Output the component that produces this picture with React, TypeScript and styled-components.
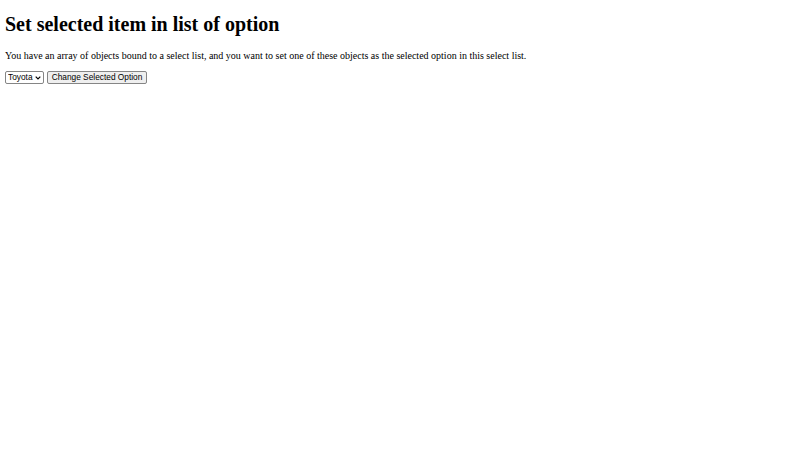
import React from "react";
import styled, { createGlobalStyle } from "styled-components";

const Global = createGlobalStyle`
  html, body { margin: 0; padding: 0; background: #fff; }
  body { font-family: "Liberation Serif", "Times New Roman", serif; color: #000; }
`;

const Page = styled.div`
  padding: 13px 5px 5px 5px;
`;

const Title = styled.h1`
  font-size: 20px;
  font-weight: bold;
  margin: 0 0 14px 0;
  line-height: normal;
`;

const Text = styled.p`
  font-size: 10px;
  margin: 0 0 10px 0;
  line-height: normal;
`;

const Controls = styled.div`
  display: flex;
  align-items: center;
  gap: 3px;
`;

const SelectWrap = styled.div`
  position: relative;
  display: inline-flex;
`;

const Select = styled.select`
  appearance: none;
  -webkit-appearance: none;
  box-sizing: border-box;
  width: 39px;
  height: 13px;
  padding: 0 9px 0 2px;
  margin: 0;
  border: 1px solid #858585;
  border-radius: 2px;
  background: #fff;
  color: #000;
  font-family: "Liberation Sans", Arial, sans-serif;
  font-size: 8.33px;
  line-height: 11px;
`;

const Chevron = styled.svg`
  position: absolute;
  right: 3px;
  top: 4.5px;
  width: 6px;
  height: 4px;
  pointer-events: none;
`;

const Button = styled.button`
  box-sizing: border-box;
  width: 100px;
  height: 13px;
  padding: 0 3px;
  margin: 0;
  border: 1px solid #858585;
  border-radius: 2px;
  background: #efefef;
  color: #000;
  font-family: "Liberation Sans", Arial, sans-serif;
  font-size: 8.33px;
  line-height: 11px;
  white-space: nowrap;
`;

export default function App() {
  return (
    <>
      <Global />
      <Page>
        <Title>Set selected item in list of option</Title>
        <Text>
          You have an array of objects bound to a select list, and you want to set one of these objects as the selected option in this select list.
        </Text>
        <Controls>
          <SelectWrap>
            <Select defaultValue="Toyota">
              <option>Toyota</option>
              <option>Honda</option>
              <option>Ford</option>
            </Select>
            <Chevron viewBox="0 0 6 4">
              <path d="M0.7 0.7 L3 3 L5.3 0.7" fill="none" stroke="#000" strokeWidth="1.2" />
            </Chevron>
          </SelectWrap>
          <Button>Change Selected Option</Button>
        </Controls>
      </Page>
    </>
  );
}
